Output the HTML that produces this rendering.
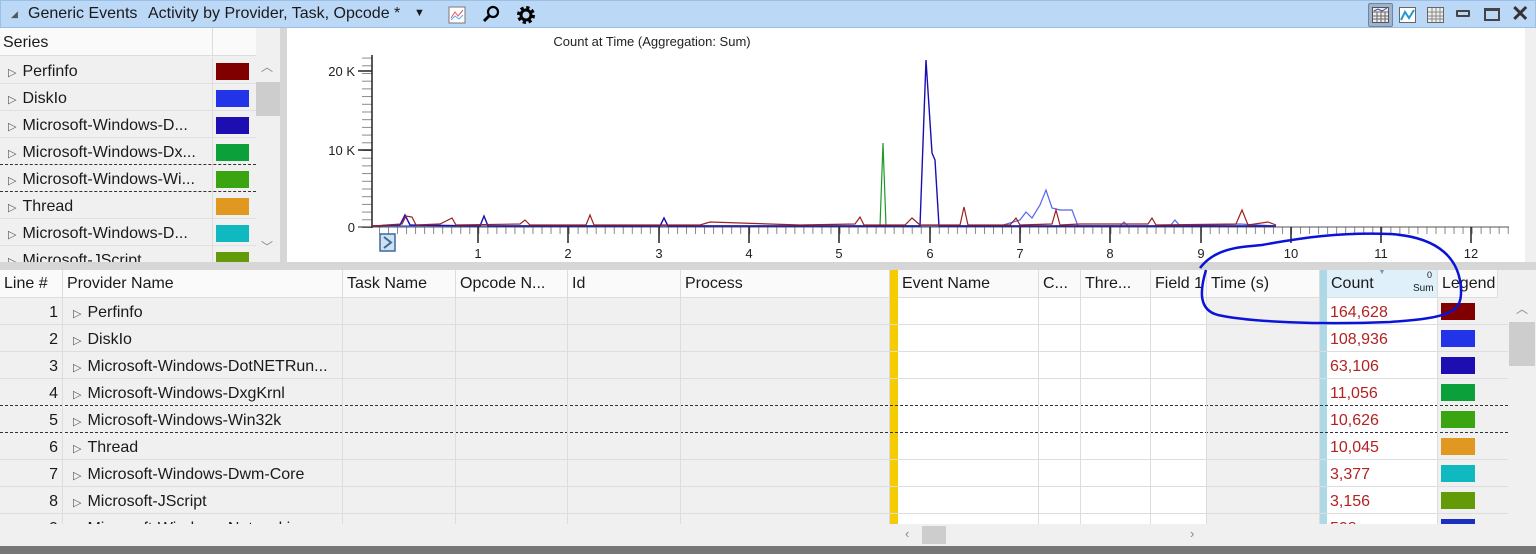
<!DOCTYPE html>
<html><head><meta charset="utf-8"><style>
*{margin:0;padding:0;box-sizing:border-box}
body{width:1536px;height:554px;overflow:hidden;background:#f0f0f0;font-family:"Segoe UI","Liberation Sans",sans-serif;font-size:16px;color:#1a1a1a;position:relative}
.abs{position:absolute}
.title{left:0;top:0;width:1536px;height:28px;background:#bcd8f7;border:1px solid #9ebfe5}
.series{left:0;top:28px;width:256px;height:234px;background:#f0f0f0;overflow:hidden}
.srow{position:absolute;left:0;width:256px;height:27px;border-bottom:1px solid #e0e0e0}
.srow .t{position:absolute;left:8px;top:6px;white-space:nowrap}
.srow .t b{font-weight:normal;font-size:11px;color:#555;margin-right:6px}
.srow .c{position:absolute;left:216px;top:6px;width:33px;height:17px}
.srow .v{position:absolute;left:212px;top:0;width:1px;height:27px;background:#ddd}
.hd{position:absolute;top:270px;height:28px;background:#fafafa;border-right:1px solid #ddd;border-bottom:1px solid #ddd;padding:5px 0 0 4px;white-space:nowrap;overflow:hidden}
.row{position:absolute;left:0;width:1508px;height:27px;border-bottom:1px solid #ddd}
.cell{position:absolute;top:0;height:27px;border-right:1px solid #ddd;padding-top:6px;white-space:nowrap}
.num{color:#b22222}
</style></head><body>
<div class="abs title">
<span class="abs" style="left:10px;top:8px;font-size:9px;color:#555">◢</span>
<span class="abs" style="left:27px;top:4px">Generic Events</span>
<span class="abs" style="left:147px;top:4px">Activity by Provider, Task, Opcode *</span>
<span class="abs" style="left:413px;top:6px;font-size:11px">▼</span>
<svg class="abs" style="left:447px;top:5px" width="18" height="18"><rect x="1" y="1" width="16" height="16" fill="#fff" stroke="#777"/><path d="M3 12 L7 6 L10 10 L15 4" stroke="#e55" fill="none"/><path d="M3 14 L7 10 L11 13 L15 9" stroke="#5af" fill="none"/></svg>
<svg class="abs" style="left:481px;top:4px" width="18" height="18"><circle cx="11" cy="7" r="5" stroke="#000" stroke-width="2.2" fill="none"/><path d="M7 11 L2 16" stroke="#000" stroke-width="3"/></svg>
<svg class="abs" style="left:514px;top:3px" width="22" height="22" viewBox="0 0 22 22"><circle cx="11" cy="11" r="7" fill="none" stroke="#000" stroke-width="4" stroke-dasharray="3 2.5"/><circle cx="11" cy="11" r="5" fill="none" stroke="#000" stroke-width="3"/></svg>
<div class="abs" style="left:1367px;top:2px;width:25px;height:24px;background:#9fb4cc;border:1px solid #6f859e;border-radius:2px"></div>
<svg class="abs" style="left:1371px;top:6px" width="17" height="16"><rect x="0.5" y="0.5" width="16" height="15" fill="#eee" stroke="#555"/><path d="M1 5H16M1 9H16M1 12H16M5 5V15M9 5V15M13 5V15" stroke="#666"/><path d="M2 4 L6 2 L10 4 L15 1" stroke="#44a" fill="none"/></svg>
<svg class="abs" style="left:1398px;top:6px" width="17" height="16"><rect x="0.5" y="0.5" width="16" height="15" fill="#fff" stroke="#666"/><path d="M2 13 L6 5 L10 11 L15 3" stroke="#29c" stroke-width="2" fill="none"/></svg>
<svg class="abs" style="left:1426px;top:6px" width="17" height="16"><rect x="0.5" y="0.5" width="16" height="15" fill="#eee" stroke="#666"/><path d="M1 5H16M1 9H16M1 12H16M5 1V15M9 1V15M13 1V15" stroke="#888"/></svg>
<div class="abs" style="left:1455px;top:9px;width:14px;height:7px;border:2px solid #444;border-radius:1px"></div>
<div class="abs" style="left:1483px;top:7px;width:16px;height:13px;border:2px solid #444;border-top-width:3px"></div>
<span class="abs" style="left:1510px;top:0px;font-size:22px;font-weight:bold;color:#333">✕</span>
</div>

<div class="abs series">
<div class="abs" style="left:0;top:0;width:256px;height:28px;background:#fafafa;border-bottom:1px solid #ddd"><span class="abs" style="left:3px;top:6px">Series</span><div class="abs" style="left:212px;top:0;width:1px;height:28px;background:#ddd"></div></div>
<div class="srow" style="top:29px"><div class="t"><b>▷</b>Perfinfo</div><div class="v"></div><div class="c" style="background:#800000"></div></div>
<div class="srow" style="top:56px"><div class="t"><b>▷</b>DiskIo</div><div class="v"></div><div class="c" style="background:#2233e8"></div></div>
<div class="srow" style="top:83px"><div class="t"><b>▷</b>Microsoft-Windows-D...</div><div class="v"></div><div class="c" style="background:#1c0eb0"></div></div>
<div class="srow" style="top:110px;border-bottom:1px dashed #333"><div class="t"><b>▷</b>Microsoft-Windows-Dx...</div><div class="v"></div><div class="c" style="background:#0ca03a"></div></div>
<div class="srow" style="top:137px;border-bottom:1px dashed #333"><div class="t"><b>▷</b>Microsoft-Windows-Wi...</div><div class="v"></div><div class="c" style="background:#3aa510"></div></div>
<div class="srow" style="top:164px"><div class="t"><b>▷</b>Thread</div><div class="v"></div><div class="c" style="background:#e09820"></div></div>
<div class="srow" style="top:191px"><div class="t"><b>▷</b>Microsoft-Windows-D...</div><div class="v"></div><div class="c" style="background:#10b8c0"></div></div>
<div class="srow" style="top:218px"><div class="t"><b>▷</b>Microsoft-JScript</div><div class="v"></div><div class="c" style="background:#629a08"></div></div>
</div>
<div class="abs" style="left:256px;top:28px;width:24px;height:234px;background:#f0f0f0"><span class="abs" style="left:5px;top:30px;font-size:12px;color:#888">︿</span><div class="abs" style="left:0;top:54px;width:24px;height:34px;background:#cdcdcd"></div><span class="abs" style="left:5px;top:210px;font-size:12px;color:#888">﹀</span></div>
<div class="abs" style="left:280px;top:28px;width:7px;height:234px;background:#d6d6d6"></div>

<svg class="abs" style="left:287px;top:28px;background:#fff" width="1238" height="234" viewBox="287 28 1238 234">
<defs><pattern id="tk" x="388" y="0" width="9.03" height="234" patternUnits="userSpaceOnUse"><line x1="0.5" y1="227" x2="0.5" y2="236" stroke="#888"/></pattern>
<pattern id="ty" x="0" y="227" width="20" height="7.7" patternUnits="userSpaceOnUse"><line x1="0" y1="0.5" x2="20" y2="0.5" stroke="#888"/></pattern></defs>
<text x="652" y="46" font-size="13" text-anchor="middle" font-family="Segoe UI,Liberation Sans,sans-serif" fill="#222">Count at Time (Aggregation: Sum)</text>
<rect x="362" y="55" width="10" height="173" fill="url(#ty)"/>
<line x1="372" y1="55" x2="372" y2="228" stroke="#222" stroke-width="1.5"/>
<line x1="358" y1="71" x2="372" y2="71" stroke="#222" stroke-width="1.5"/><line x1="358" y1="150" x2="372" y2="150" stroke="#222" stroke-width="1.5"/><line x1="358" y1="227" x2="372" y2="227" stroke="#222"/>
<g font-size="13" font-family="Segoe UI,Liberation Sans,sans-serif" fill="#222" text-anchor="end"><text x="355" y="76">20 K</text><text x="355" y="155">10 K</text><text x="355" y="232">0</text></g>
<rect x="372" y="227" width="1137" height="9" fill="url(#tk)"/>
<line x1="372" y1="227" x2="1509" y2="227" stroke="#555"/>
<g stroke="#222" stroke-width="1.5"><line x1="478" y1="227" x2="478" y2="243"/><line x1="568" y1="227" x2="568" y2="243"/><line x1="659" y1="227" x2="659" y2="243"/><line x1="749" y1="227" x2="749" y2="243"/><line x1="839" y1="227" x2="839" y2="243"/><line x1="930" y1="227" x2="930" y2="243"/><line x1="1020" y1="227" x2="1020" y2="243"/><line x1="1110" y1="227" x2="1110" y2="243"/><line x1="1201" y1="227" x2="1201" y2="243"/><line x1="1291" y1="227" x2="1291" y2="243"/><line x1="1381" y1="227" x2="1381" y2="243"/><line x1="1471" y1="227" x2="1471" y2="243"/></g>
<g font-size="13" font-family="Segoe UI,Liberation Sans,sans-serif" fill="#222" text-anchor="middle"><text x="478" y="258">1</text><text x="568" y="258">2</text><text x="659" y="258">3</text><text x="749" y="258">4</text><text x="839" y="258">5</text><text x="930" y="258">6</text><text x="1020" y="258">7</text><text x="1110" y="258">8</text><text x="1201" y="258">9</text><text x="1291" y="258">10</text><text x="1381" y="258">11</text><text x="1471" y="258">12</text></g>
<rect x="380" y="234" width="15" height="17" fill="#cfe0f0" stroke="#3a6a9a" stroke-width="1.5"/><path d="M384 237 L391 242.5 L384 248" stroke="#3a6a9a" stroke-width="2" fill="none"/>
<path d="M372 226 L880 226 L883 143 L886 226 L1276 226" stroke="#1a9a2a" stroke-width="1.2" fill="none"/>
<path d="M372 226 L1000 226 L1020 220 L1026 212 L1032 218 L1040 205 L1046 190 L1052 208 L1060 210 L1072 210 L1078 226 L1120 226 L1124 222 L1128 226 L1170 226 L1175 220 L1180 226 L1240 224 L1276 226" stroke="#5566ee" stroke-width="1.2" fill="none"/>
<path d="M372 226 L400 225 L405 215 L410 225 L480 226 L484 216 L488 226 L660 226 L664 218 L668 226 L920 226 L926 60 L932 153 L935 160 L939 226 L1276 226" stroke="#1c0eb0" stroke-width="1.4" fill="none"/>
<path d="M372 226 L402 224 L406 216 L412 217 L416 225 L440 224 L452 218 L456 225 L520 224 L525 220 L530 225 L586 225 L590 215 L594 225 L700 225 L710 222 L800 225 L855 224 L860 217 L864 225 L905 225 L912 218 L920 225 L960 225 L964 207 L968 225 L1010 225 L1016 218 L1020 225 L1052 224 L1056 210 L1060 225 L1080 224 L1148 224 L1152 218 L1156 225 L1236 224 L1242 210 L1248 225 L1268 222 L1276 225" stroke="#992222" stroke-width="1.2" fill="none"/>
</svg>
<div class="abs" style="left:1525px;top:28px;width:11px;height:234px;background:#f0f0f0"></div>
<div class="abs" style="left:0;top:262px;width:1536px;height:8px;background:#d6d6d6"></div>

<div class="hd" style="left:0;width:63px">Line #</div>
<div class="hd" style="left:63px;width:280px">Provider Name</div>
<div class="hd" style="left:343px;width:113px">Task Name</div>
<div class="hd" style="left:456px;width:112px">Opcode N...</div>
<div class="hd" style="left:568px;width:113px">Id</div>
<div class="hd" style="left:681px;width:209px">Process</div>
<div class="hd" style="left:898px;width:141px">Event Name</div>
<div class="hd" style="left:1039px;width:42px">C...</div>
<div class="hd" style="left:1081px;width:70px">Thre...</div>
<div class="hd" style="left:1151px;width:56px">Field 1</div>
<div class="hd" style="left:1207px;width:113px">Time (s)</div>
<div class="hd" style="left:1327px;width:111px;background:#dff0fa">Count<span class="abs" style="left:100px;top:0;font-size:9px">0</span><span class="abs" style="left:86px;top:13px;font-size:10px">Sum</span><span class="abs" style="left:50px;top:-4px;font-size:10px;color:#6a9ab8">▼</span></div>
<div class="hd" style="left:1438px;width:60px">Legend</div>

<div class="abs" style="left:0;top:298px;width:1508px;height:226px;overflow:hidden;background:#f0f0f0">
<div class="abs" style="left:898px;top:0;width:141px;height:226px;background:#fff"></div>
<div class="abs" style="left:1039px;top:0;width:168px;height:226px;background:#fff"></div>
<div class="abs" style="left:1207px;top:0;width:113px;height:226px;background:#f0f0f0"></div>
<div class="abs" style="left:1327px;top:0;width:111px;height:226px;background:#fff"></div>
</div>
<div class="abs" style="left:890px;top:270px;width:8px;height:254px;background:#f5cc00"></div>
<div class="abs" style="left:1320px;top:270px;width:7px;height:254px;background:#add8e6"></div>

<div class="abs" style="left:0;top:298px;width:1508px;height:226px;overflow:hidden">
<script>
var d=[["1","Perfinfo","164,628","#800000"],["2","DiskIo","108,936","#2233e8"],["3","Microsoft-Windows-DotNETRun...","63,106","#1c0eb0"],["4","Microsoft-Windows-DxgKrnl","11,056","#0ca03a"],["5","Microsoft-Windows-Win32k","10,626","#3aa510"],["6","Thread","10,045","#e09820"],["7","Microsoft-Windows-Dwm-Core","3,377","#10b8c0"],["8","Microsoft-JScript","3,156","#629a08"],["9","Microsoft-Windows-Networking","508","#1c30c0"]];
var cols=[343,456,568,681,890,1039,1081,1151,1207,1320,1438];
for(var i=0;i<d.length;i++){var t=i*27;var bb=(i==3||i==4)?"border-bottom:1px dashed #333;":"";
var h='<div class="row" style="top:'+t+'px;'+bb+'"><div class="cell" style="left:0;width:63px;text-align:right;padding-right:4px">'+d[i][0]+'</div><div class="cell" style="left:63px;width:280px;padding-left:10px"><span style="font-size:11px;color:#555;margin-right:6px">▷</span>'+d[i][1]+'</div>';
for(var j=0;j<cols.length-1;j++){h+='<div class="cell" style="left:'+cols[j]+'px;width:'+(cols[j+1]-cols[j])+'px"></div>';}
h+='<div class="cell num" style="left:1327px;width:111px;padding-left:3px">'+d[i][2]+'</div><div class="abs" style="left:1441px;top:5px;width:34px;height:17px;background:'+d[i][3]+'"></div></div>';
document.write(h);}
</script>
</div>
<div class="abs" style="left:1508px;top:298px;width:28px;height:226px;background:#f0f0f0"><span class="abs" style="left:8px;top:2px;font-size:12px;color:#888">︿</span><div class="abs" style="left:1px;top:24px;width:26px;height:44px;background:#cdcdcd"></div></div>
<div class="abs" style="left:0;top:524px;width:1536px;height:22px;background:#f0f0f0"><span class="abs" style="left:905px;top:2px;font-size:13px;color:#888">‹</span><div class="abs" style="left:922px;top:2px;width:24px;height:18px;background:#cdcdcd"></div><span class="abs" style="left:1190px;top:2px;font-size:13px;color:#888">›</span></div>
<div class="abs" style="left:0;top:546px;width:1536px;height:8px;background:#777"></div>

<svg class="abs" style="left:0;top:0" width="1536" height="554"><path d="M1200 268 C1215 248 1240 247 1262 245 C1300 238 1340 232 1390 234 C1440 237 1460 260 1461 290 C1462 312 1450 318 1390 322 C1320 325 1250 322 1218 315 C1198 310 1200 290 1206 270" stroke="#0a14d8" stroke-width="2.5" fill="none"/></svg>
</body></html>
